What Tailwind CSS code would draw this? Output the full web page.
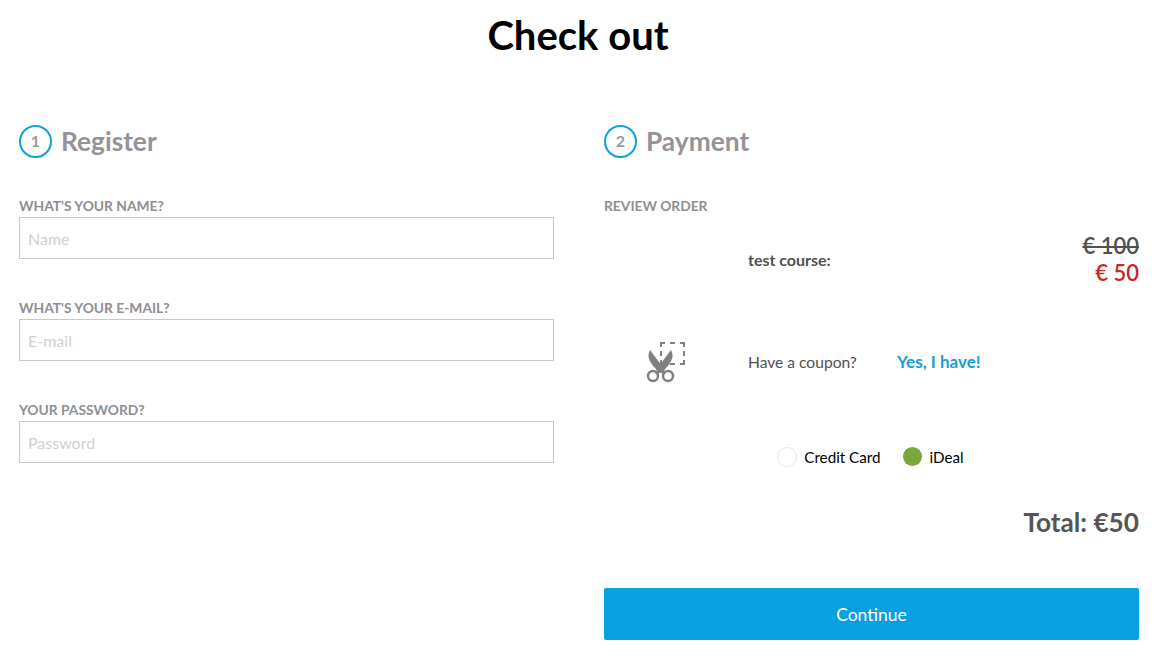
<!DOCTYPE html>
<html lang="en">
  <head>
    <meta charset="UTF-8" />
    <title>Check out</title>
    <script src="https://cdn.jsdelivr.net/npm/@tailwindcss/browser@4"></script>
  </head>
  <body class="bg-white font-['Lato',sans-serif] text-[#505050]">
    <div class="w-[1166px] h-[670px] overflow-hidden">
      <h1 class="h-[72px] pt-[11px] text-center text-[40px] leading-[48px] font-bold text-black pr-[10px]">Check out</h1>

      <div class="grid grid-cols-[535px_535px] gap-x-[50px] pl-[19px] pt-[52px]">
        <!-- register -->
        <section>
          <div class="flex items-center gap-[9px] h-[34px]">
            <span class="w-[33px] h-[33px] rounded-full border-2 border-[#0ea0df] flex items-center justify-center text-[16px] font-bold text-[#9a9a9e]">1</span>
            <h2 class="text-[26.300px] leading-[34px] font-bold text-[#939398]">Register</h2>
          </div>
          <form class="mt-[38px] flex flex-col gap-[39px]">
            <div>
              <label class="block pb-[2px] text-[13.800px] leading-[19px] font-bold text-[#8e8e93]">WHAT'S YOUR NAME?</label>
              <input type="text" placeholder="Name" class="block w-full h-[42px] px-2 border border-[#c8c8c8] text-[16px] placeholder-[#cfcfd4] outline-none" />
            </div>
            <div>
              <label class="block pb-[2px] text-[13.800px] leading-[19px] font-bold text-[#8e8e93]">WHAT'S YOUR E-MAIL?</label>
              <input type="text" placeholder="E-mail" class="block w-full h-[42px] px-2 border border-[#c8c8c8] text-[16px] placeholder-[#cfcfd4] outline-none" />
            </div>
            <div>
              <label class="block pb-[2px] text-[13.800px] leading-[19px] font-bold text-[#8e8e93]">YOUR PASSWORD?</label>
              <input type="password" placeholder="Password" class="block w-full h-[42px] px-2 border border-[#c8c8c8] text-[16px] placeholder-[#cfcfd4] outline-none" />
            </div>
          </form>
        </section>

        <!-- payment -->
        <section>
          <div class="flex items-center gap-[9px] h-[34px]">
            <span class="w-[33px] h-[33px] rounded-full border-2 border-[#0ea0df] flex items-center justify-center text-[16px] font-bold text-[#9a9a9e]">2</span>
            <h2 class="text-[26.300px] leading-[34px] font-bold text-[#939398]">Payment</h2>
          </div>
          <div class="mt-[38px] text-[13.800px] leading-[20px] font-bold text-[#8e8e93]">REVIEW ORDER</div>

          <div class="flex items-center h-[58px] mt-[15px]">
            <div class="w-[144px]"></div>
            <div class="flex-1 text-[16px] font-bold">test course:</div>
            <div class="pb-[2px] text-right text-[22px] leading-[27px] font-semibold">
              <div class="line-through">€ 100</div>
              <div class="text-[#c8281f]">€ 50</div>
            </div>
          </div>

          <div class="flex items-center h-[60px] mt-[43px]">
            <div class="w-[144px] pl-[41px]">
              <svg width="42" height="42" viewBox="0 0 42 42" class="block">
                <path fill="none" stroke="#808080" stroke-width="2" d="M16 6V2H20M25 2H30M35 2H39V6M39 10V15M39 19V23H35M30 23H25M20 23H16V19M16 10V15" />
                <path fill="#808080" d="M5 9L20 29L15 32C5 23 1 16 5 9Z" />
                <path fill="#808080" d="M26 9L11 29L16 32C26 23 30 16 26 9Z" />
                <path fill="none" stroke="#808080" stroke-width="3" d="M15.500 29L11 33M15.500 29L20 33" />
                <circle cx="8" cy="35" r="5" fill="none" stroke="#808080" stroke-width="2.500" />
                <circle cx="23" cy="35" r="5" fill="none" stroke="#808080" stroke-width="2.500" />
              </svg>
            </div>
            <div class="w-[149px] pt-[1px] text-[15.600px]">Have a coupon?</div>
            <a class="text-[17px] font-bold text-[#1c9bd8]">Yes, I have!</a>
          </div>

          <div class="flex justify-center items-center mt-[53px] pr-[2px] h-[24px] text-[15.200px] text-black">
            <label class="flex items-center gap-[7px] mr-[22px]">
              <span class="w-[20px] h-[20px] rounded-full bg-white border border-[#e6e6e6]"></span>
              Credit Card
            </label>
            <label class="flex items-center gap-[8px]">
              <span class="w-[19px] h-[19px] rounded-full bg-[#7ba63a]"></span>
              iDeal
            </label>
          </div>

          <div class="mt-[37px] text-right text-[26.200px] leading-[32px] font-bold text-[#555555]">Total: €50</div>

          <button class="mt-[50px] w-full h-[52px] pt-[2px] rounded-[2px] bg-[#0a9fe0] text-white text-[17.500px]">Continue</button>
        </section>
      </div>
    </div>
  </body>
</html>
